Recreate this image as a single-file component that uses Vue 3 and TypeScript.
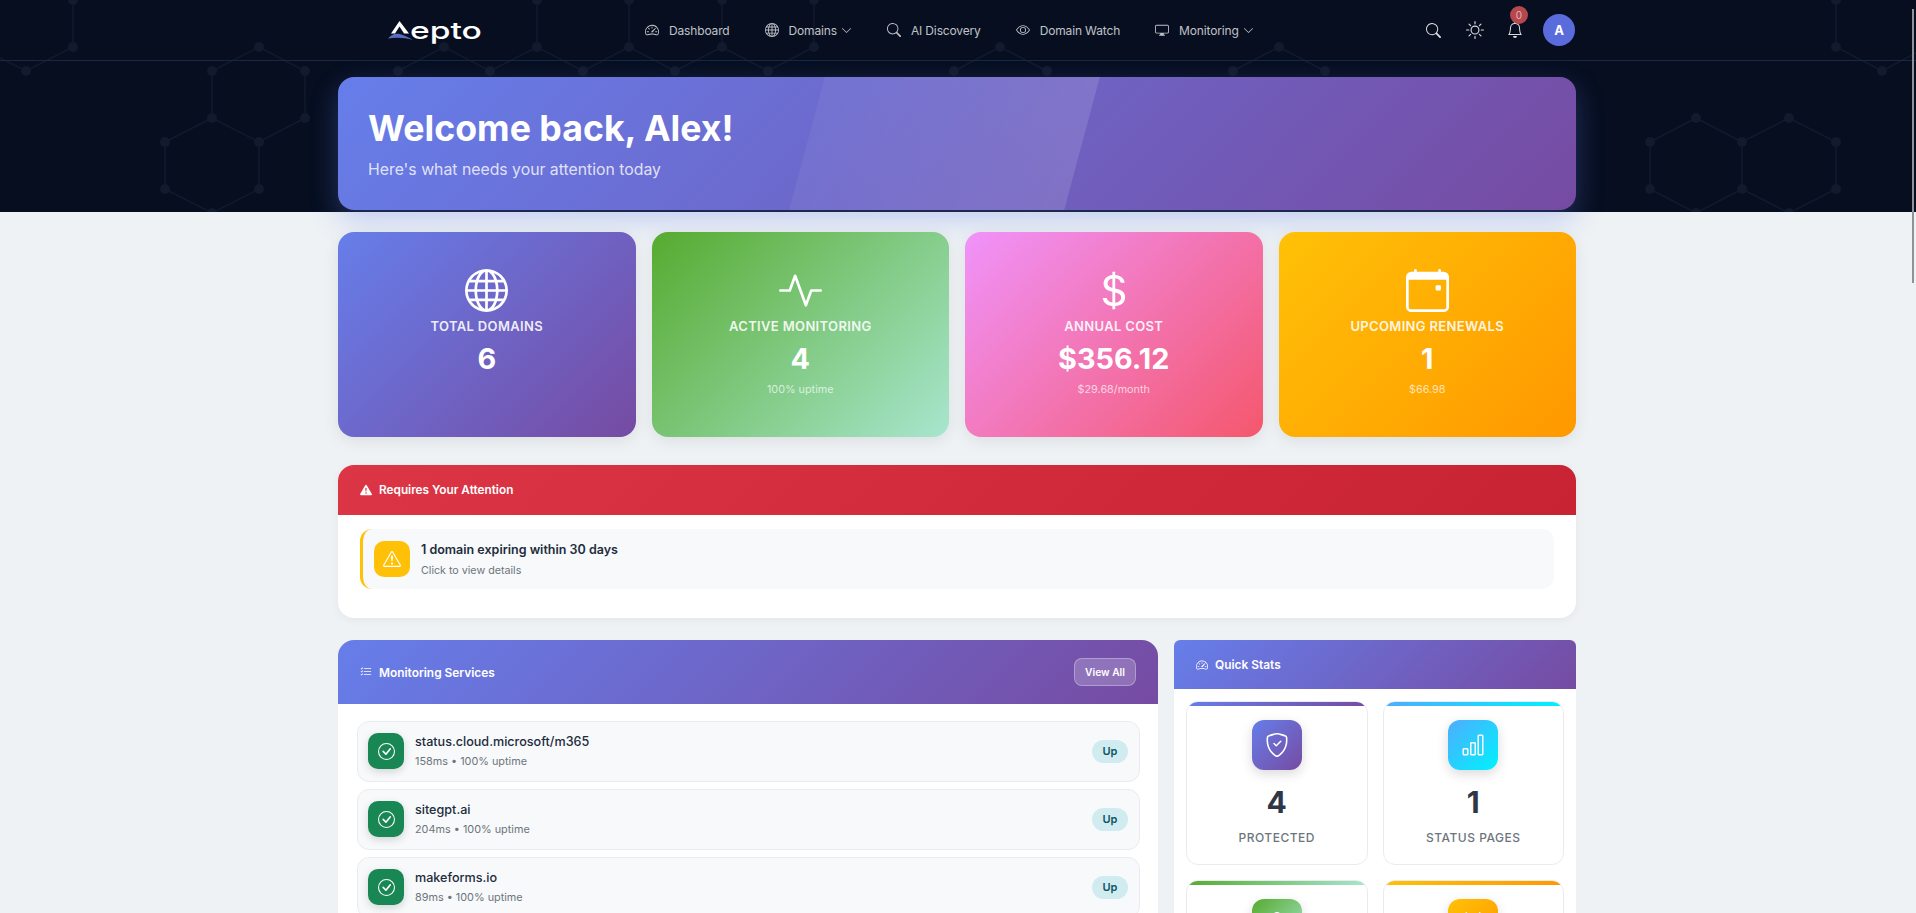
<script setup lang="ts">
const icons: Record<string, string> = {
  speedometer:
    'M8 4a.5.5 0 0 1 .5.5V6a.5.5 0 0 1-1 0V4.5A.5.5 0 0 1 8 4M3.732 5.732a.5.5 0 0 1 .707 0l.915.914a.5.5 0 1 1-.708.708l-.914-.915a.5.5 0 0 1 0-.707M2 10a.5.5 0 0 1 .5-.5h1.586a.5.5 0 0 1 0 1H2.5A.5.5 0 0 1 2 10m9.5 0a.5.5 0 0 1 .5-.5h1.5a.5.5 0 0 1 0 1H12a.5.5 0 0 1-.5-.5m.754-4.246a.39.39 0 0 0-.527-.02L7.547 9.31a.91.91 0 1 0 1.302 1.258l3.434-4.297a.39.39 0 0 0-.029-.518zM0 10a8 8 0 1 1 15.547 2.661c-.442 1.253-1.845 1.591-2.932 1.27C11.309 13.488 9.475 13 8 13c-1.474 0-3.31.488-4.615.931-1.087.32-2.49-.017-2.932-1.27A8 8 0 0 1 0 10m8-7a7 7 0 0 0-6.603 9.329c.203.575.923.876 1.68.63C4.397 12.533 6.358 12 8 12s3.604.532 4.923.96c.757.245 1.477-.056 1.68-.631A7 7 0 0 0 8 3',
  globe:
    'M0 8a8 8 0 1 1 16 0A8 8 0 0 1 0 8m7.5-6.923c-.67.204-1.335.82-1.887 1.855A8 8 0 0 0 5.145 4H7.5zM4.09 4a9.3 9.3 0 0 1 .64-1.539 7 7 0 0 1 .597-.933A7.03 7.03 0 0 0 2.255 4zm-.582 3.5c.03-.877.138-1.718.312-2.5H1.674a7 7 0 0 0-.656 2.5zM4.847 5a12.5 12.5 0 0 0-.338 2.5H7.5V5zM8.5 5v2.5h2.99a12.5 12.5 0 0 0-.337-2.5zM4.51 8.5a12.5 12.5 0 0 0 .337 2.5H7.5V8.5zm3.99 0V11h2.653c.187-.765.306-1.608.338-2.5zM5.145 12q.208.58.468 1.068c.552 1.035 1.218 1.65 1.887 1.855V12zm.182 2.472a7 7 0 0 1-.597-.933A9.3 9.3 0 0 1 4.09 12H2.255a7 7 0 0 0 3.072 2.472M3.82 11a13.7 13.7 0 0 1-.312-2.5h-2.49c.062.89.291 1.733.656 2.5zm6.853 3.472A7 7 0 0 0 13.745 12H11.91a9.3 9.3 0 0 1-.64 1.539 7 7 0 0 1-.597.933M8.5 12v2.923c.67-.204 1.335-.82 1.887-1.855q.26-.487.468-1.068zm3.68-1h2.146c.365-.767.594-1.61.656-2.5h-2.49a13.7 13.7 0 0 1-.312 2.5m2.802-3.5a7 7 0 0 0-.656-2.5H12.18c.174.782.282 1.623.312 2.5zM11.27 2.461c.247.464.462.98.64 1.539h1.835a7 7 0 0 0-3.072-2.472c.218.284.418.598.597.933M10.855 4a8 8 0 0 0-.468-1.068C9.835 1.897 9.17 1.282 8.5 1.077V4z',
  search:
    'M11.742 10.344a6.5 6.5 0 1 0-1.397 1.398h-.001q.044.06.098.115l3.85 3.85a1 1 0 0 0 1.415-1.414l-3.85-3.85a1 1 0 0 0-.115-.1zM12 6.5a5.5 5.5 0 1 1-11 0 5.5 5.5 0 0 1 11 0',
  eye: 'M16 8s-3-5.5-8-5.5S0 8 0 8s3 5.5 8 5.5S16 8 16 8M1.173 8a13 13 0 0 1 1.66-2.043C4.12 4.668 5.88 3.5 8 3.5s3.879 1.168 5.168 2.457A13 13 0 0 1 14.828 8q-.086.13-.195.288c-.335.48-.83 1.12-1.465 1.755C11.879 11.332 10.119 12.5 8 12.5s-3.879-1.168-5.168-2.457A13 13 0 0 1 1.172 8zM8 5.5a2.5 2.5 0 1 0 0 5 2.5 2.5 0 0 0 0-5M4.5 8a3.5 3.5 0 1 1 7 0 3.5 3.5 0 0 1-7 0',
  display:
    'M0 4s0-2 2-2h12s2 0 2 2v6s0 2-2 2h-4q0 1 .25 1.5H11a.5.5 0 0 1 0 1H5a.5.5 0 0 1 0-1h.75Q6 13 6 12H2s-2 0-2-2zm1.398-.855a.76.76 0 0 0-.254.302A1.5 1.5 0 0 0 1 4.01V10c0 .325.078.502.145.602q.105.156.302.254a1.5 1.5 0 0 0 .538.143L2.01 11H14c.325 0 .502-.078.602-.145a.76.76 0 0 0 .254-.302 1.5 1.5 0 0 0 .143-.538L15 9.99V4c0-.325-.078-.502-.145-.602a.76.76 0 0 0-.302-.254A1.5 1.5 0 0 0 13.99 3H2c-.325 0-.502.078-.602.145',
  chevron:
    'M1.646 4.646a.5.5 0 0 1 .708 0L8 10.293l5.646-5.647a.5.5 0 0 1 .708.708l-6 6a.5.5 0 0 1-.708 0l-6-6a.5.5 0 0 1 0-.708',
  sun: 'M8 11a3 3 0 1 1 0-6 3 3 0 0 1 0 6m0 1a4 4 0 1 0 0-8 4 4 0 0 0 0 8M8 0a.5.5 0 0 1 .5.5v2a.5.5 0 0 1-1 0v-2A.5.5 0 0 1 8 0m0 13a.5.5 0 0 1 .5.5v2a.5.5 0 0 1-1 0v-2A.5.5 0 0 1 8 13m8-5a.5.5 0 0 1-.5.5h-2a.5.5 0 0 1 0-1h2a.5.5 0 0 1 .5.5M3 8a.5.5 0 0 1-.5.5h-2a.5.5 0 0 1 0-1h2A.5.5 0 0 1 3 8m10.657-5.657a.5.5 0 0 1 0 .707l-1.414 1.415a.5.5 0 1 1-.707-.708l1.414-1.414a.5.5 0 0 1 .707 0m-9.193 9.193a.5.5 0 0 1 0 .707L3.05 13.657a.5.5 0 0 1-.707-.707l1.414-1.414a.5.5 0 0 1 .707 0m9.193 2.121a.5.5 0 0 1-.707 0l-1.414-1.414a.5.5 0 0 1 .707-.707l1.414 1.414a.5.5 0 0 1 0 .707M4.464 4.465a.5.5 0 0 1-.707 0L2.343 3.05a.5.5 0 1 1 .707-.707l1.414 1.414a.5.5 0 0 1 0 .708',
  bell: 'M8 16a2 2 0 0 0 2-2H6a2 2 0 0 0 2 2M8 1.918l-.797.161A4 4 0 0 0 4 6c0 .628-.134 2.197-.459 3.742-.16.767-.376 1.566-.663 2.258h10.244c-.287-.692-.502-1.49-.663-2.258C12.134 8.197 12 6.628 12 6a4 4 0 0 0-3.203-3.92zM14.22 12c.223.447.481.801.78 1H1c.299-.199.557-.553.78-1C2.68 10.2 3 6.88 3 6c0-2.42 1.72-4.44 4.005-4.901a1 1 0 1 1 1.99 0A5 5 0 0 1 13 6c0 .88.32 4.2 1.22 6',
  activity:
    'M6 2a.5.5 0 0 1 .47.33L10 12.036l1.53-4.208A.5.5 0 0 1 12 7.5h3.5a.5.5 0 0 1 0 1h-3.15l-1.88 5.17a.5.5 0 0 1-.94 0L6 3.964 4.47 8.171A.5.5 0 0 1 4 8.5H.5a.5.5 0 0 1 0-1h3.15l1.88-5.17A.5.5 0 0 1 6 2',
  dollar:
    'M4 10.781c.148 1.667 1.513 2.85 3.591 3.003V15h1.043v-1.216c2.27-.179 3.678-1.438 3.678-3.3 0-1.59-.947-2.51-2.956-3.028l-.722-.187V3.467c1.122.11 1.879.714 2.07 1.616h1.47c-.166-1.6-1.54-2.748-3.54-2.875V1H7.591v1.233c-1.939.23-3.27 1.472-3.27 3.156 0 1.454.966 2.483 2.661 2.917l.61.162v4.031c-1.149-.17-1.94-.8-2.131-1.718zm3.391-3.836c-1.043-.263-1.6-.825-1.6-1.616 0-.944.704-1.641 1.8-1.828v3.495l-.2-.05zm1.591 1.872c1.287.323 1.852.859 1.852 1.769 0 1.097-.826 1.828-2.2 1.939V8.73z',
  calendar:
    'M11 6.5a.5.5 0 0 1 .5-.5h1a.5.5 0 0 1 .5.5v1a.5.5 0 0 1-.5.5h-1a.5.5 0 0 1-.5-.5zM3.5 0a.5.5 0 0 1 .5.5V1h8V.5a.5.5 0 0 1 1 0V1h1a2 2 0 0 1 2 2v11a2 2 0 0 1-2 2H2a2 2 0 0 1-2-2V3a2 2 0 0 1 2-2h1V.5a.5.5 0 0 1 .5-.5M1 4v10a1 1 0 0 0 1 1h12a1 1 0 0 0 1-1V4z',
  warnFill:
    'M8.982 1.566a1.13 1.13 0 0 0-1.96 0L.165 13.233c-.457.778.091 1.767.98 1.767h13.713c.889 0 1.438-.99.98-1.767zM8 5c.535 0 .954.462.9.995l-.35 3.507a.552.552 0 0 1-1.1 0L7.1 5.995A.905.905 0 0 1 8 5m.002 6a1 1 0 1 1 0 2 1 1 0 0 1 0-2',
  warn: 'M7.938 2.016A.13.13 0 0 1 8.002 2a.13.13 0 0 1 .063.016.15.15 0 0 1 .054.057l6.857 11.667c.036.06.035.124.002.183a.2.2 0 0 1-.054.06.1.1 0 0 1-.066.017H1.146a.1.1 0 0 1-.066-.017.2.2 0 0 1-.054-.06.18.18 0 0 1 .002-.183L7.884 2.073a.15.15 0 0 1 .054-.057m1.044-.45a1.13 1.13 0 0 0-1.96 0L.165 13.233c-.457.778.091 1.767.98 1.767h13.713c.889 0 1.438-.99.98-1.767zM7.002 12a1 1 0 1 1 2 0 1 1 0 0 1-2 0M7.1 5.995a.905.905 0 1 1 1.8 0l-.35 3.507a.552.552 0 0 1-1.1 0z',
  check:
    'M8 15A7 7 0 1 1 8 1a7 7 0 0 1 0 14m0 1A8 8 0 1 0 8 0a8 8 0 0 0 0 16M10.97 4.97l-.02.022-3.473 4.425-2.093-2.094a.75.75 0 0 0-1.06 1.06L6.97 11.03a.75.75 0 0 0 1.079-.02l3.992-4.99a.75.75 0 0 0-1.071-1.05',
  list: 'M5 11.5a.5.5 0 0 1 .5-.5h9a.5.5 0 0 1 0 1h-9a.5.5 0 0 1-.5-.5m0-4a.5.5 0 0 1 .5-.5h9a.5.5 0 0 1 0 1h-9a.5.5 0 0 1-.5-.5m0-4a.5.5 0 0 1 .5-.5h9a.5.5 0 0 1 0 1h-9a.5.5 0 0 1-.5-.5M3.854 2.146a.5.5 0 0 1 0 .708l-1.5 1.5a.5.5 0 0 1-.708 0l-.5-.5a.5.5 0 1 1 .708-.708L2 3.293l1.146-1.147a.5.5 0 0 1 .708 0m0 4a.5.5 0 0 1 0 .708l-1.5 1.5a.5.5 0 0 1-.708 0l-.5-.5a.5.5 0 1 1 .708-.708L2 7.293l1.146-1.147a.5.5 0 0 1 .708 0m0 4a.5.5 0 0 1 0 .708l-1.5 1.5a.5.5 0 0 1-.708 0l-.5-.5a.5.5 0 0 1 .708-.708l.146.147 1.146-1.147a.5.5 0 0 1 .708 0',
  shield:
    'M5.338 1.59a61 61 0 0 0-2.837.856.48.48 0 0 0-.328.39c-.554 4.157.726 7.19 2.253 9.188a10.7 10.7 0 0 0 2.287 2.233c.346.244.652.42.893.533q.18.085.293.118a1 1 0 0 0 .101.025 1 1 0 0 0 .1-.025q.114-.034.294-.118c.24-.113.547-.29.893-.533a10.7 10.7 0 0 0 2.287-2.233c1.527-1.997 2.807-5.031 2.253-9.188a.48.48 0 0 0-.328-.39c-.651-.213-1.75-.56-2.837-.855C9.552 1.29 8.531 1.067 8 1.067c-.53 0-1.552.223-2.662.524zM5.072.56C6.157.265 7.31 0 8 0s1.843.265 2.928.56c1.11.3 2.229.655 2.887.87a1.54 1.54 0 0 1 1.044 1.262c.596 4.477-.787 7.795-2.465 9.99a11.8 11.8 0 0 1-2.517 2.453 7 7 0 0 1-1.048.625c-.28.132-.581.24-.829.24s-.548-.108-.829-.24a7 7 0 0 1-1.048-.625 11.8 11.8 0 0 1-2.517-2.453C1.928 10.487.545 7.169 1.141 2.692A1.54 1.54 0 0 1 2.185 1.43 63 63 0 0 1 5.072.56M10.854 5.146a.5.5 0 0 1 0 .708l-3 3a.5.5 0 0 1-.708 0l-1.5-1.5a.5.5 0 1 1 .708-.708L7.5 7.793l2.646-2.647a.5.5 0 0 1 .708 0',
  bars: 'M4 11H2v3h2zm5-4H7v7h2zm5-5v12h-2V2zm-2-1a1 1 0 0 0-1 1v12a1 1 0 0 0 1 1h2a1 1 0 0 0 1-1V2a1 1 0 0 0-1-1zM6 7a1 1 0 0 1 1-1h2a1 1 0 0 1 1 1v7a1 1 0 0 1-1 1H7a1 1 0 0 1-1-1zm-5 4a1 1 0 0 1 1-1h2a1 1 0 0 1 1 1v3a1 1 0 0 1-1 1H2a1 1 0 0 1-1-1z',
  lock: 'M8 1a2 2 0 0 1 2 2v4H6V3a2 2 0 0 1 2-2m3 6V3a3 3 0 0 0-6 0v4a2 2 0 0 0-2 2v5a2 2 0 0 0 2 2h6a2 2 0 0 0 2-2V9a2 2 0 0 0-2-2',
}

const navItems = [
  { label: 'Dashboard', icon: 'speedometer', menu: false },
  { label: 'Domains', icon: 'globe', menu: true },
  { label: 'AI Discovery', icon: 'search', menu: false },
  { label: 'Domain Watch', icon: 'eye', menu: false },
  { label: 'Monitoring', icon: 'display', menu: true },
]

const stats = [
  { label: 'Total Domains', value: '6', note: '', icon: 'globe', tone: 'purple' },
  { label: 'Active Monitoring', value: '4', note: '100% uptime', icon: 'activity', tone: 'green' },
  { label: 'Annual Cost', value: '$356.12', note: '$29.68/month', icon: 'dollar', tone: 'pink' },
  { label: 'Upcoming Renewals', value: '1', note: '$66.98', icon: 'calendar', tone: 'orange' },
]

const services = [
  { name: 'status.cloud.microsoft/m365', meta: '158ms • 100% uptime' },
  { name: 'sitegpt.ai', meta: '204ms • 100% uptime' },
  { name: 'makeforms.io', meta: '89ms • 100% uptime' },
]

// the lower two tiles run off the bottom of the page, only their tops show
const tiles = [
  { id: 'protected', label: 'Protected', value: '4', icon: 'shield', tone: 'purple' },
  { id: 'pages', label: 'Status Pages', value: '1', icon: 'bars', tone: 'cyan' },
  { id: 'ssl', label: '', value: '', icon: 'lock', tone: 'green' },
  { id: 'renewals', label: '', value: '', icon: 'calendar', tone: 'orange' },
]

// honeycomb behind the top band
const hexLines = [
  'M73 0V47M0 58L26 71L73 47',
  'M212 71L259 47L305 71V118L259 142L212 118Z',
  'M212 118L165 142V189L212 213L259 189V142',
  'M398 71L444 47L490 71L537 47L583 71L629 47L675 71L722 47L768 71L814 47',
  'M537 0V47M629 0V47M722 0V47M814 0V47',
  'M954 71L1000 47L1047 71M1233 71L1279 47L1325 71',
  'M1836 0V47L1882 71L1916 53',
  'M1696 118L1650 142V189L1696 213L1742 189V142ZM1696 118L1742 142L1789 118L1836 142V189L1789 213L1742 189',
].join('')

const hexNodes = [
  [73, 0], [73, 47], [26, 71], [259, 47], [212, 71], [305, 71], [212, 118], [305, 118], [259, 142],
  [165, 142], [165, 189], [212, 213], [259, 189], [398, 71], [444, 47], [490, 71], [537, 0], [537, 47],
  [583, 71], [629, 0], [629, 47], [675, 71], [722, 0], [722, 47], [768, 71], [814, 0], [814, 47],
  [954, 71], [1000, 47], [1047, 71], [1233, 71], [1279, 47], [1325, 71], [1836, 0], [1836, 47], [1882, 71],
  [1696, 118], [1650, 142], [1650, 189], [1696, 213], [1742, 142], [1742, 189], [1789, 118], [1789, 213],
  [1836, 142], [1836, 189],
]
</script>

<template>
  <div class="page">
    <div class="top">
      <svg class="hex" width="1916" height="212" viewBox="0 0 1916 212">
        <path :d="hexLines" fill="none" stroke="#121a2d" stroke-width="1.5" />
        <circle v-for="n in hexNodes" :key="n.join()" :cx="n[0]" :cy="n[1]" r="5" fill="#121a2d" />
      </svg>

      <header class="navbar">
        <div class="wrap navbar-inner">
          <div class="logo">
            <svg class="logo-mark" width="26" height="24" viewBox="0 0 26 24">
              <path d="M11.500 1L3 13.500H7L11.500 6.500L16 13.500H21Z" fill="#fff" />
              <path d="M0 18.500C3 14.500 7 13.200 10.500 13.800C15 14.500 20.500 17.500 25 20C17 17.500 8 17 0 18.500Z" fill="#5c6bc0" />
            </svg>
            <span class="logo-text">epto</span>
          </div>
          <nav class="nav">
            <a v-for="item in navItems" :key="item.label" class="nav-link">
              <svg class="nav-icon" viewBox="0 0 16 16" fill="currentColor"><path :d="icons[item.icon]" /></svg>
              <span>{{ item.label }}</span>
              <svg v-if="item.menu" class="nav-chevron" viewBox="0 0 16 16" fill="currentColor"><path :d="icons.chevron" /></svg>
            </a>
          </nav>
          <div class="actions">
            <svg class="action-search" viewBox="0 0 16 16" fill="currentColor"><path :d="icons.search" /></svg>
            <svg class="action-sun" viewBox="0 0 16 16" fill="currentColor"><path :d="icons.sun" /></svg>
            <div class="bell">
              <svg viewBox="0 0 16 16" fill="currentColor"><path :d="icons.bell" /></svg>
              <span class="bell-badge">0</span>
            </div>
            <div class="avatar">A</div>
          </div>
        </div>
      </header>

      <div class="wrap">
        <section class="hero">
          <div class="hero-shine"></div>
          <h1>Welcome back, Alex!</h1>
          <p>Here's what needs your attention today</p>
        </section>
      </div>
    </div>

    <main class="wrap content">
      <section class="stats">
        <div v-for="s in stats" :key="s.label" class="stat" :class="s.tone">
          <svg class="stat-icon" viewBox="0 0 16 16" fill="currentColor"><path :d="icons[s.icon]" /></svg>
          <div class="stat-label">{{ s.label }}</div>
          <div class="stat-value">{{ s.value }}</div>
          <div v-if="s.note" class="stat-note">{{ s.note }}</div>
        </div>
      </section>

      <section class="attention">
        <div class="attention-head">
          <svg viewBox="0 0 16 16" fill="currentColor"><path :d="icons.warnFill" /></svg>
          <span>Requires Your Attention</span>
        </div>
        <div class="attention-body">
          <div class="alert">
            <div class="alert-icon">
              <svg viewBox="0 0 16 16" fill="currentColor"><path :d="icons.warn" /></svg>
            </div>
            <div>
              <div class="alert-title">1 domain expiring within 30 days</div>
              <div class="alert-sub">Click to view details</div>
            </div>
          </div>
        </div>
      </section>

      <section class="columns">
        <div class="panel services">
          <div class="panel-head purple">
            <div class="panel-title">
              <svg viewBox="0 0 16 16" fill="currentColor"><path :d="icons.list" /></svg>
              <span>Monitoring Services</span>
            </div>
            <button class="view-all">View All</button>
          </div>
          <div class="service-list">
            <div v-for="s in services" :key="s.name" class="service">
              <div class="service-icon">
                <svg viewBox="0 0 16 16" fill="currentColor"><path :d="icons.check" /></svg>
              </div>
              <div class="service-text">
                <div class="service-name">{{ s.name }}</div>
                <div class="service-meta">{{ s.meta }}</div>
              </div>
              <span class="service-badge">Up</span>
            </div>
          </div>
        </div>

        <div class="panel quick">
          <div class="panel-head quick-head purple">
            <div class="panel-title">
              <svg viewBox="0 0 16 16" fill="currentColor"><path :d="icons.speedometer" /></svg>
              <span>Quick Stats</span>
            </div>
          </div>
          <div class="tiles">
            <div v-for="t in tiles" :key="t.id" class="tile">
              <div class="tile-bar" :class="t.tone"></div>
              <div class="tile-icon" :class="t.tone">
                <svg viewBox="0 0 16 16" fill="currentColor"><path :d="icons[t.icon]" /></svg>
              </div>
              <div v-if="t.value" class="tile-value">{{ t.value }}</div>
              <div v-if="t.label" class="tile-label">{{ t.label }}</div>
            </div>
          </div>
        </div>
      </section>
    </main>

    <div class="scroll-thumb"></div>
  </div>
</template>

<style>
html,
body {
  margin: 0;
  overflow: hidden;
  background: #eef2f5;
}
</style>

<style scoped>
.page {
  position: relative;
  height: 913px;
  overflow: hidden;
  font-family: Inter, "Noto Sans", sans-serif;
  background: #eef2f5;
  color: #212529;
}

.purple { background: linear-gradient(135deg, #667eea, #764ba2); }
.green { background: linear-gradient(135deg, #56ab2f, #a8e6cf); }
.pink { background: linear-gradient(135deg, #f093fb, #f5576c); }
.orange { background: linear-gradient(135deg, #ffc107, #ff9800); }
.cyan { background: linear-gradient(135deg, #4facfe, #00f2fe); }

.wrap {
  width: 1238px;
  margin-left: 338px;
}

.top {
  position: relative;
  height: 212px;
  background: #060e20;
}

.hex {
  position: absolute;
  left: 0;
  top: 0;
}

.navbar {
  position: relative;
  height: 60px;
  border-bottom: 1px solid #1a2745;
}

.navbar-inner {
  height: 60px;
  padding: 0 1px 0 50px;
  box-sizing: border-box;
  display: flex;
  align-items: center;
}

.logo {
  width: 257px;
  display: flex;
  align-items: center;
  color: #fff;
}

.logo-mark {
  flex: none;
  margin-right: -4px;
  margin-top: 3px;
}

.logo-text {
  display: inline-block;
  font-size: 24px;
  font-weight: 500;
  line-height: 24px;
  margin-top: 2px;
  transform: scaleX(1.4);
  transform-origin: left center;
}

.nav {
  display: flex;
  align-items: center;
  gap: 35px;
}

.nav-link {
  display: flex;
  align-items: center;
  font-size: 12px;
  letter-spacing: -0.15px;
  color: rgba(255, 255, 255, 0.75);
}

.nav-icon {
  width: 14px;
  height: 14px;
  margin-right: 10px;
}

.nav-chevron {
  width: 11px;
  height: 11px;
  margin-left: 4px;
}

.actions {
  margin-left: auto;
  display: flex;
  align-items: center;
  color: rgba(255, 255, 255, 0.85);
}

.action-search {
  width: 15px;
  height: 15px;
  margin-right: 25px;
}

.action-sun {
  width: 18px;
  height: 18px;
  margin-right: 23px;
}

.bell {
  position: relative;
  width: 16px;
  height: 16px;
  margin-right: 20px;
}

.bell svg {
  display: block;
  width: 16px;
  height: 16px;
}

.bell-badge {
  position: absolute;
  left: 3px;
  top: -16px;
  width: 18px;
  height: 18px;
  border-radius: 50%;
  background: #b5484c;
  color: rgba(255, 255, 255, 0.6);
  font-size: 10px;
  line-height: 18px;
  text-align: center;
}

.avatar {
  width: 32px;
  height: 32px;
  border-radius: 50%;
  background: #5a6bdc;
  color: #fff;
  font-size: 13px;
  font-weight: 700;
  line-height: 32px;
  text-align: center;
}

.hero {
  position: relative;
  height: 133px;
  margin-top: 16px;
  padding: 32px 30px 0;
  box-sizing: border-box;
  border-radius: 16px;
  overflow: hidden;
  color: #fff;
  background: linear-gradient(135deg, #667eea, #764ba2);
  box-shadow: 0 10px 28px rgba(102, 126, 234, 0.32);
}

.hero-shine {
  position: absolute;
  left: 469px;
  top: 0;
  width: 275px;
  height: 100%;
  transform: skewX(-15deg);
  background: linear-gradient(90deg, rgba(255, 255, 255, 0.05), rgba(255, 255, 255, 0.12));
}

.hero h1 {
  position: relative;
  margin: 0;
  font-size: 35.700px;
  font-weight: 700;
  line-height: 38px;
}

.hero p {
  position: relative;
  margin: 11px 0 0;
  font-size: 15.800px;
  line-height: 24px;
  color: rgba(255, 255, 255, 0.8);
}

.content {
  position: relative;
  padding-top: 20px;
}

.stats {
  display: grid;
  grid-template-columns: repeat(4, 1fr);
  gap: 16px;
}

.stat {
  height: 205px;
  padding-top: 37px;
  box-sizing: border-box;
  border-radius: 16px;
  display: flex;
  flex-direction: column;
  align-items: center;
  color: #fff;
  box-shadow: 0 4px 16px rgba(0, 0, 0, 0.08);
}

.stat-icon {
  width: 43px;
  height: 43px;
}

.stat-label {
  margin-top: 4px;
  font-size: 13px;
  font-weight: 600;
  line-height: 20px;
  text-transform: uppercase;
  letter-spacing: 0.35px;
  color: rgba(255, 255, 255, 0.9);
}

.stat-value {
  margin-top: 3px;
  font-size: 28.800px;
  font-weight: 700;
  line-height: 40px;
}

.stat-note {
  margin-top: 2px;
  font-size: 10.800px;
  line-height: 18px;
  color: rgba(255, 255, 255, 0.7);
}

.attention {
  margin-top: 28px;
  height: 153px;
  border-radius: 16px;
  overflow: hidden;
  background: #fff;
  box-shadow: 0 2px 10px rgba(0, 0, 0, 0.05);
}

.attention-head {
  height: 50px;
  padding: 0 22px;
  display: flex;
  align-items: center;
  gap: 7px;
  color: #fff;
  font-size: 11.800px;
  font-weight: 600;
  background: linear-gradient(135deg, #dc3545, #c82333);
}

.attention-head svg {
  width: 12px;
  height: 12px;
}

.attention-body {
  padding: 14px 22px 0;
}

.alert {
  height: 60px;
  padding: 0 11px;
  box-sizing: border-box;
  display: flex;
  align-items: center;
  gap: 11px;
  border-left: 3px solid #ffc107;
  border-radius: 12px;
  background: #f8f9fa;
}

.alert-icon {
  width: 36px;
  height: 36px;
  flex: none;
  border-radius: 10px;
  background: #ffc107;
  color: #fff;
  display: flex;
  align-items: center;
  justify-content: center;
}

.alert-icon svg {
  width: 18px;
  height: 18px;
}

.alert-title {
  margin-top: 1px;
  font-size: 12.500px;
  font-weight: 600;
  line-height: 20px;
  color: #212c3d;
}

.alert-sub {
  margin-top: 3px;
  font-size: 10.700px;
  line-height: 16px;
  color: #6c757d;
}

.columns {
  margin-top: 22px;
  display: grid;
  grid-template-columns: 820px 402px;
  gap: 16px;
  align-items: start;
}

.panel {
  background: #fff;
  border-radius: 16px 16px 0 0;
  overflow: hidden;
}

.panel-head {
  height: 64px;
  padding: 0 22px;
  display: flex;
  align-items: center;
  justify-content: space-between;
  color: #fff;
}

.quick {
  border-radius: 6px 6px 0 0;
}

.quick-head {
  height: 49px;
}

.panel-title {
  display: flex;
  align-items: center;
  gap: 7px;
  font-size: 11.900px;
  font-weight: 600;
}

.panel-title svg {
  width: 12px;
  height: 12px;
}

.view-all {
  width: 62px;
  height: 28px;
  padding: 0;
  border: 1px solid rgba(255, 255, 255, 0.3);
  border-radius: 8px;
  background: rgba(255, 255, 255, 0.2);
  color: #fff;
  font-family: inherit;
  font-size: 10.200px;
  font-weight: 600;
}

.service-list {
  padding: 17px 18px 0 19px;
  display: flex;
  flex-direction: column;
  gap: 7.500px;
}

.service {
  height: 60.500px;
  padding: 0 11px 0 10px;
  box-sizing: border-box;
  border: 1px solid #e9ecef;
  border-radius: 12px;
  background: #f8f9fa;
  display: flex;
  align-items: center;
  gap: 11px;
}

.service-icon {
  width: 36px;
  height: 36px;
  flex: none;
  border-radius: 10px;
  background: #198754;
  color: #fff;
  display: flex;
  align-items: center;
  justify-content: center;
  box-shadow: 0 3px 8px rgba(0, 0, 0, 0.15);
}

.service-icon svg {
  width: 17px;
  height: 17px;
}

.service-text {
  flex: 1;
}

.service-name {
  font-size: 12.600px;
  font-weight: 500;
  line-height: 18px;
  color: #212c3d;
}

.service-meta {
  margin-top: 2px;
  font-size: 10.850px;
  line-height: 16px;
  color: #6c757d;
}

.service-badge {
  width: 36px;
  height: 23px;
  border-radius: 12px;
  background: #d1ecf1;
  color: #0c5460;
  font-size: 11px;
  font-weight: 600;
  line-height: 23px;
  text-align: center;
}

.tiles {
  padding: 12px 12px 0;
  display: grid;
  grid-template-columns: 1fr 1fr;
  gap: 15px;
}

.tile {
  position: relative;
  height: 164px;
  padding-top: 18px;
  box-sizing: border-box;
  border: 1px solid #e9ecef;
  border-radius: 12px;
  overflow: hidden;
  background: #fff;
  display: flex;
  flex-direction: column;
  align-items: center;
}

.tile-bar {
  position: absolute;
  left: 0;
  right: 0;
  top: 0;
  height: 4px;
}

.tile-icon {
  width: 50px;
  height: 50px;
  flex: none;
  border-radius: 12px;
  color: #fff;
  display: flex;
  align-items: center;
  justify-content: center;
  box-shadow: 0 4px 12px rgba(0, 0, 0, 0.15);
}

.tile-icon svg {
  width: 24px;
  height: 24px;
}

.tile-value {
  margin-top: 12px;
  font-size: 30px;
  font-weight: 700;
  line-height: 40px;
  color: #2d3748;
}

.tile-label {
  margin-top: 7px;
  font-size: 12px;
  font-weight: 500;
  line-height: 18px;
  letter-spacing: 0.5px;
  text-transform: uppercase;
  color: #6c757d;
}

.scroll-thumb {
  position: absolute;
  left: 1912px;
  top: 9px;
  width: 2px;
  height: 274px;
  background: #8f9397;
}
</style>
